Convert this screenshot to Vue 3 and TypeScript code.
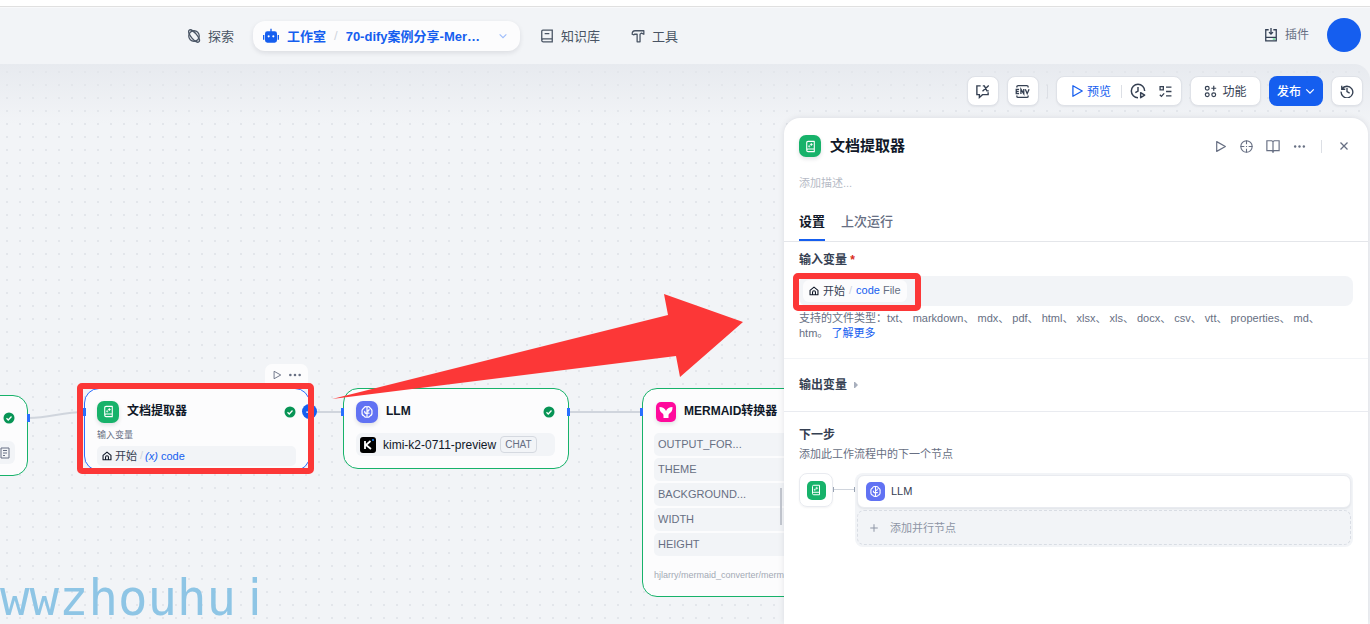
<script setup lang="ts">
interface FlowNode {
  id: string
  x: number
  y: number
}

const nodes: Record<string, FlowNode> = {
  start: { id: 'start', x: -198, y: 331 },
  extractor: { id: 'extractor', x: 84, y: 324 },
  llm: { id: 'llm', x: 343, y: 324 },
  mermaid: { id: 'mermaid', x: 642, y: 324 },
}

const place = (node: FlowNode) => ({ left: `${node.x}px`, top: `${node.y}px` })

const mermaidParams: string[] = ['OUTPUT_FOR...', 'THEME', 'BACKGROUND...', 'WIDTH', 'HEIGHT']

const fileTypes: string[] = [
  'txt', 'markdown', 'mdx', 'pdf', 'html', 'xlsx', 'xls', 'docx', 'csv', 'vtt', 'properties', 'md',
]
const supported: string = fileTypes.map((t) => `${t}、`).join(' ') + ' htm。'
</script>

<template>
  <div class="page">
    <svg class="defs" aria-hidden="true">
      <symbol id="i-doc" viewBox="0 0 24 24">
        <path d="M5 18.500V5a2.500 2.500 0 0 1 2.500-2.500H19v19H7.500a2.500 2.500 0 0 1 0-5H19" fill="none" stroke="currentColor" stroke-width="2" stroke-linejoin="round" />
        <path d="M13.500 5.500l.8 2 2 .8-2 .8-.8 2-.8-2-2-.8 2-.8zM9.500 9.500l.6 1.500 1.500.6-1.500.6-.6 1.500-.6-1.500-1.500-.6 1.500-.6z" fill="currentColor" stroke="currentColor" stroke-width=".6" />
      </symbol>
      <symbol id="i-play" viewBox="0 0 24 24">
        <path d="M5 3v18L21 12z" fill="none" stroke="currentColor" stroke-width="2.200" stroke-linejoin="round" />
      </symbol>
      <symbol id="i-more" viewBox="0 0 24 24">
        <circle cx="4" cy="12" r="2.200" fill="currentColor" /><circle cx="12" cy="12" r="2.200" fill="currentColor" /><circle cx="20" cy="12" r="2.200" fill="currentColor" />
      </symbol>
      <symbol id="i-home" viewBox="0 0 24 24">
        <path d="M2.500 10.500L12 2.500l9.500 8V21h-19zM8.500 20v-5a3.500 3.500 0 0 1 7 0v5" fill="none" stroke="currentColor" stroke-width="2.600" stroke-linejoin="round" />
      </symbol>
      <symbol id="i-check" viewBox="0 0 24 24">
        <circle cx="12" cy="12" r="11" fill="#079455" />
        <path d="M7 12.500l3.500 3.500 6.500-7" fill="none" stroke="#fff" stroke-width="2.500" />
      </symbol>
      <symbol id="i-brain" viewBox="0 0 24 24">
        <path d="M12 3v18M12 3.500C9.500 2 7 3.500 6.500 5.500 4 6.500 3 9 3.500 12c-.5 3.500 1 6 3.500 6.800 1 2 3.500 2.700 5 1.700 1.500 1 4 .3 5-1.700 2.500-.8 4-3.300 3.500-6.800.5-3-.5-5.500-3-6.500C17 3.500 14.500 2 12 3.500zM12 14.500c-2.500 0-4-1-4-3.500M12 10.500c2 0 3.500-1 3.500-3M12 14h3.500" fill="none" stroke="currentColor" stroke-width="2" stroke-linecap="round" />
      </symbol>
    </svg>

    <header class="topbar">
      <nav class="nav">
        <a class="nav-item" href="#explore">
          <svg class="ic14" viewBox="0 0 24 24" fill="none" stroke="currentColor" stroke-width="2.200">
            <circle cx="12" cy="12" r="9" /><ellipse cx="12" cy="12" rx="13" ry="5" transform="rotate(50 12 12)" />
          </svg>
          <span>探索</span>
        </a>
        <div class="nav-pill">
          <a class="pill-link" href="#studio">
            <svg class="ic16" viewBox="0 0 24 24" fill="currentColor">
              <path d="M11 1h2v4h4.500A3.500 3.500 0 0 1 21 8.500V18.500A3.500 3.500 0 0 1 17.500 22h-11A3.500 3.500 0 0 1 3 18.500V8.500A3.500 3.500 0 0 1 6.500 5H11zM0 10.500h2v7H0zM22 10.500h2v7h-2z" />
              <circle cx="8.500" cy="12.500" r="1.600" fill="#fff" /><circle cx="15.500" cy="12.500" r="1.600" fill="#fff" />
            </svg>
            <span>工作室</span>
          </a>
          <span class="slash">/</span>
          <button class="app-switch" type="button">
            <span>70-dify案例分享-Mer…</span>
            <svg class="ic10" viewBox="0 0 24 24" fill="none" stroke="#9dbcfb" stroke-width="2.600"><path d="M4 8l8 8 8-8" /></svg>
          </button>
        </div>
        <a class="nav-item" href="#knowledge">
          <svg class="ic14" viewBox="0 0 24 24" fill="none" stroke="currentColor" stroke-width="2.200">
            <path d="M3 19V4a2 2 0 0 1 2-2h16v20H5.500a2.500 2.500 0 0 1 0-5H21M8 8h8" />
          </svg>
          <span>知识库</span>
        </a>
        <a class="nav-item tools" href="#tools">
          <svg class="ic14" viewBox="0 0 24 24" fill="none" stroke="currentColor" stroke-width="2.200" stroke-linejoin="round">
            <path d="M2 9c0-4 2-6 5-6h15v6l-4-2-2.500 2v13h-5V9H6l-1 1z" />
          </svg>
          <span>工具</span>
        </a>
      </nav>
      <div class="account">
        <a class="plugins" href="#plugins">
          <svg class="ic14" viewBox="0 0 24 24" fill="none" stroke="#344054" stroke-width="2.200">
            <path d="M8 3H3v19h18V3h-5M3 16h18M12 0v10M8.500 7l3.500 3.500L15.500 7" /><path d="M15 19h4" stroke="#4ade80" />
          </svg>
          <span>插件</span>
        </a>
        <button class="avatar" type="button" aria-label="account"></button>
      </div>
    </header>

    <main class="canvas">
      <section class="flow">
        <svg class="edges" aria-hidden="true">
          <g fill="none" stroke="#d0d5dd" stroke-width="2">
            <path d="M29 354C50 354 62 348 84 348" /><path d="M310 348H343" /><path d="M569 348H642" />
          </g>
        </svg>

        <article class="node node-start" :style="place(nodes.start)">
          <svg class="ic12 state"><use href="#i-check" /></svg>
          <div class="start-row">
            <svg class="ic12" viewBox="0 0 24 24" fill="none" stroke="#676f83" stroke-width="2"><path d="M4 2h16v20H4zM8 7h8M8 12h8M8 17h4" /></svg>
          </div>
        </article>

        <div class="node-actions">
          <button type="button" aria-label="run"><svg class="ic10"><use href="#i-play" /></svg></button>
          <button type="button" aria-label="more"><svg class="ic14"><use href="#i-more" /></svg></button>
        </div>
        <article class="node selected" :style="place(nodes.extractor)">
          <div class="node-head">
            <span class="badge green"><svg class="ic13"><use href="#i-doc" /></svg></span>
            <h3>文档提取器</h3>
            <svg class="ic12 state"><use href="#i-check" /></svg>
          </div>
          <div class="node-label">输入变量</div>
          <div class="var-row">
            <svg class="ic10 dark"><use href="#i-home" /></svg>
            <span>开始</span><span class="slash">/</span><i>(x)</i><b>code</b>
          </div>
        </article>
        <button class="add-next" type="button" aria-label="add">
          <svg class="ic10" viewBox="0 0 24 24" stroke="#fff" stroke-width="3"><path d="M12 3v18M3 12h18" /></svg>
        </button>

        <article class="node" :style="place(nodes.llm)">
          <div class="node-head">
            <span class="badge indigo"><svg class="ic14"><use href="#i-brain" /></svg></span>
            <h3>LLM</h3>
            <svg class="ic12 state"><use href="#i-check" /></svg>
          </div>
          <div class="model-row">
            <svg class="ic16" viewBox="0 0 16 16">
              <rect width="16" height="16" rx="3" fill="#000" /><path d="M5 4v8M10.500 4L6 8l5 4" fill="none" stroke="#fff" stroke-width="1.800" /><circle cx="13" cy="3" r="1" fill="#1783ff" />
            </svg>
            <span>kimi-k2-0711-preview</span><em>CHAT</em>
          </div>
        </article>

        <article class="node node-mermaid" :style="place(nodes.mermaid)">
          <div class="node-head">
            <span class="badge pink">
              <svg class="ic20" viewBox="0 0 20 20"><path d="M3.500 5C6.500 5 9 6.500 10 9c1-2.500 3.500-4 6.500-4 .2 3.500-1 5-2.800 6.300-.9.700-1.200 1.400-1.200 2.400V16h-5v-2.300c0-1-.3-1.700-1.200-2.400C4.500 10 3.300 8.500 3.500 5z" fill="#fff" /></svg>
            </span>
            <h3>MERMAID转换器</h3>
          </div>
          <ul class="params">
            <li v-for="p in mermaidParams" :key="p">{{ p }}</li>
          </ul>
          <div class="plugin-path">hjlarry/mermaid_converter/mermaid_converter</div>
        </article>

        <svg class="edges" aria-hidden="true">
          <g fill="#2970ff">
            <rect x="27" y="350" width="3" height="8" /><rect x="83" y="344" width="3" height="8" />
            <rect x="341" y="344" width="3" height="8" /><rect x="567" y="344" width="3" height="8" /><rect x="640" y="344" width="3" height="8" />
          </g>
        </svg>
        <div class="watermark">wwzhouhu<span>i</span></div>
        <span class="scroll-mark"></span>
      </section>

      <div class="toolbar">
        <button class="tool square" type="button" aria-label="conversation variables">
          <svg class="ic15" viewBox="0 0 24 24" fill="none" stroke="currentColor" stroke-width="2.200">
            <path d="M9 3H3v14h4v4.500l5-4.500h9v-4" /><path d="M12.500 3H15l4 8h3M22 2.500L12 11.500" />
          </svg>
        </button>
        <button class="tool square" type="button" aria-label="environment variables">
          <svg class="ic15" viewBox="0 0 24 24" fill="none" stroke="currentColor" stroke-width="2.100">
            <path d="M3 5.500V4.500a2 2 0 0 1 2-2h14a2 2 0 0 1 2 2v1M3 18.500v1a2 2 0 0 0 2 2h14a2 2 0 0 0 2-2v-1M6.500 8.500H2v7h4.500M2 12h4M9.500 16V8.500l4.500 7V8M16.500 8.500l3 7 3-7" />
          </svg>
        </button>
        <span class="vline"></span>
        <div class="tool group">
          <button class="preview" type="button"><svg class="ic14"><use href="#i-play" /></svg><span>预览</span></button>
          <span class="vline"></span>
          <button type="button" aria-label="run history">
            <svg class="ic16" viewBox="0 0 24 24" fill="none" stroke="currentColor" stroke-width="2.200">
              <path d="M22 12A10 10 0 1 0 12 22M12 6v6l-4 2.500" /><path d="M16 14.500v7.500l6-3.700z" stroke-linejoin="round" />
            </svg>
          </button>
          <button type="button" aria-label="checklist">
            <svg class="ic13" viewBox="0 0 24 24" fill="none" stroke="currentColor" stroke-width="2.400">
              <path d="M2 3h6v6H2zM13 4h10M13 12h10M13 20h10M1.500 18l3 3 5-5.500" />
            </svg>
          </button>
        </div>
        <button class="tool features" type="button">
          <svg class="ic13" viewBox="0 0 24 24" fill="none" stroke="currentColor" stroke-width="2.200">
            <circle cx="6" cy="6" r="3.500" /><circle cx="6" cy="18" r="3.500" /><circle cx="18" cy="18" r="3.500" /><path d="M18 1.500v9M13.500 6h9" />
          </svg>
          <span>功能</span>
        </button>
        <button class="publish" type="button">
          <span>发布</span>
          <svg class="ic10" viewBox="0 0 24 24" fill="none" stroke="#fff" stroke-width="3"><path d="M3 8l9 9 9-9" /></svg>
        </button>
        <button class="tool square" type="button" aria-label="version history">
          <svg class="ic14" viewBox="0 0 24 24" fill="none" stroke="currentColor" stroke-width="2.300">
            <path d="M3 3v6h6M3.500 8.500A10 10 0 1 1 2 13M12 6.500V13l4.500 2.500" />
          </svg>
        </button>
      </div>

      <aside class="panel">
        <div class="panel-head">
          <span class="badge green"><svg class="ic13"><use href="#i-doc" /></svg></span>
          <h2>文档提取器</h2>
          <div class="panel-tools">
            <button type="button" aria-label="run"><svg class="ic13"><use href="#i-play" /></svg></button>
            <button type="button" aria-label="locate">
              <svg class="ic13" viewBox="0 0 24 24" fill="none" stroke="currentColor" stroke-width="2"><circle cx="12" cy="12" r="10.500" /><path d="M12 1v7M12 16v7M1 12h7M16 12h7M11 12h2" /></svg>
            </button>
            <button type="button" aria-label="docs">
              <svg class="ic14" viewBox="0 0 24 24" fill="none" stroke="currentColor" stroke-width="2"><path d="M1.500 3H10l2 1.500L14 3h8.500v17H14l-2 1.500L10 20H1.500zM12 4v20" /></svg>
            </button>
            <button type="button" aria-label="more"><svg class="ic13"><use href="#i-more" /></svg></button>
            <span class="vline"></span>
            <button type="button" aria-label="close">
              <svg class="ic12" viewBox="0 0 24 24" fill="none" stroke="currentColor" stroke-width="2.600"><path d="M5 5l14 14M19 5L5 19" /></svg>
            </button>
          </div>
        </div>
        <input class="desc" type="text" placeholder="添加描述..." aria-label="添加描述" />
        <div class="tabs" role="tablist">
          <button type="button" role="tab" aria-selected="true" class="active">设置</button>
          <button type="button" role="tab" aria-selected="false">上次运行</button>
        </div>

        <section class="block inputs">
          <h4>输入变量 <span class="req">*</span></h4>
          <button class="field" type="button">
            <span class="chip">
              <svg class="ic10 dark"><use href="#i-home" /></svg>
              <span>开始</span><span class="slash">/</span><b>code</b><span class="type">File</span>
            </span>
          </button>
          <p class="help">支持的文件类型：{{ supported }} <a href="#more">了解更多</a></p>
        </section>

        <section class="block outputs">
          <h4>输出变量</h4>
          <svg class="caret" viewBox="0 0 6 8"><path d="M1 1h1l3 3-3 3H1z" fill="#a8afbd" /></svg>
        </section>

        <section class="block next">
          <h4>下一步</h4>
          <p>添加此工作流程中的下一个节点</p>
          <div class="next-row">
            <div class="origin"><span class="badge green small"><svg class="ic12"><use href="#i-doc" /></svg></span></div>
            <span class="link"></span>
            <div class="targets">
              <button class="target" type="button">
                <span class="badge indigo small"><svg class="ic13"><use href="#i-brain" /></svg></span><span class="cap">LLM</span>
              </button>
              <button class="parallel" type="button">
                <svg class="ic10" viewBox="0 0 24 24" stroke="currentColor" stroke-width="2.400"><path d="M12 3v18M3 12h18" /></svg><span class="cap">添加并行节点</span>
              </button>
            </div>
          </div>
        </section>
      </aside>

      <div class="mark mark-node"></div>
      <div class="mark mark-field"></div>
      <svg class="arrow" aria-hidden="true"><path d="M332 335L668 251 664 230 743 258 680 313 676 292z" fill="#fc3737" /></svg>
    </main>
  </div>
</template>

<style>
body {
  margin: 0;
}
</style>

<style scoped>
.page {
  display: flex;
  flex-direction: column;
  min-height: 100vh;
  background: #f2f4f7;
  color: #354052;
  font-family: "Liberation Sans", "Noto Sans CJK SC", sans-serif;
  font-size: 12px;
  overflow: hidden;
}
.page *,
.page *::before {
  box-sizing: border-box;
}
.defs {
  position: absolute;
  width: 0;
  height: 0;
}
h2, h3, h4, p, ul {
  margin: 0;
  padding: 0;
}
button, input {
  margin: 0;
  padding: 0;
  border: 0;
  background: none;
  font: inherit;
  color: inherit;
}
a {
  color: inherit;
  text-decoration: none;
}
svg {
  flex: none;
}
button {
  display: flex;
  align-items: center;
  justify-content: center;
}
.ic10 { width: 10px; height: 10px; }
.ic12 { width: 12px; height: 12px; }
.ic13 { width: 13px; height: 13px; }
.ic14 { width: 14px; height: 14px; }
.ic15 { width: 15px; height: 15px; }
.ic16 { width: 16px; height: 16px; }
.ic20 { width: 20px; height: 20px; }
.dark { color: #101828; }
.slash { color: #d0d5dd; }

/* The CJK face sits low in its line box; this centres it beside icons. */
.nav span,
.account span,
.tool span:not(.vline),
.publish span,
.chip > span,
.var-row span,
.cap {
  padding-bottom: 2px;
}

.topbar {
  display: flex;
  align-items: center;
  justify-content: space-between;
  height: 64px;
  padding: 2px 9px 0 187px;
  border-top: 6px solid #fff;
  background: linear-gradient(#e0e0e0 1px, #f8f9fb 1px, #f8f9fb 2px, #f2f4f7 2px);
}
.nav {
  display: flex;
  align-items: center;
  font-size: 13px;
}
.nav-item {
  display: flex;
  align-items: center;
  gap: 7px;
  color: #495464;
}
.nav-item.tools {
  margin-left: 31px;
}
.nav-pill {
  display: flex;
  align-items: center;
  width: 267px;
  height: 30px;
  margin: 0 20px 0 19px;
  padding: 0 12px 0 10px;
  border-radius: 12px;
  background: #fcfcfd;
  box-shadow: 0 2px 5px rgba(16, 24, 40, 0.1);
  color: #155eef;
  font-weight: 700;
}
.pill-link {
  display: flex;
  align-items: center;
  gap: 8px;
}
.nav-pill .slash {
  margin: 0 8px;
  font-weight: 400;
}
.app-switch {
  flex: 1;
  justify-content: space-between;
}
.account {
  display: flex;
  align-items: center;
  gap: 18px;
  padding-bottom: 3px;
}
.plugins {
  display: flex;
  align-items: center;
  gap: 7px;
  color: #676f83;
}
.avatar {
  width: 34px;
  height: 34px;
  border-radius: 50%;
  background: #155eef;
}

.canvas {
  position: relative;
  flex: 1;
  display: flex;
  flex-direction: column;
  border-radius: 0 16px 0 8px;
  background:
    radial-gradient(circle at 7px 8px, #e3e6eb 1px, transparent 1px) 0 0 / 13px 13px,
    linear-gradient(#e7eaef, #f2f4f7 60px);
}
.flow {
  position: absolute;
  inset: 0;
  overflow: hidden;
}
.edges,
.arrow {
  position: absolute;
  inset: 0;
  width: 100%;
  height: 100%;
  pointer-events: none;
}
.node {
  position: absolute;
  width: 226px;
  padding: 11px 13px 12px 12px;
  border: 1px solid #17b26a;
  border-radius: 15px;
  background: #fcfcfd;
}
.node.selected {
  border-color: #296dff;
  padding-bottom: 4px;
}
.node-start {
  height: 81px;
  padding: 16px 12px;
}
.node-start .state {
  display: block;
  margin-left: auto;
}
.start-row {
  display: flex;
  align-items: center;
  justify-content: flex-end;
  height: 23px;
  margin-top: 17px;
  padding-right: 4px;
  border-radius: 6px;
  background: #f2f4f7;
}
.node-head {
  display: flex;
  align-items: center;
  height: 23px;
}
.node-head h3 {
  flex: 1;
  margin-left: 8px;
  padding-bottom: 1px;
  font-size: 12px;
  line-height: 18px;
  color: #101828;
  white-space: nowrap;
}
.badge {
  display: flex;
  align-items: center;
  justify-content: center;
  flex: none;
  width: 22px;
  height: 22px;
  border-radius: 7px;
  color: #fff;
  box-shadow: 0 2px 4px rgba(16, 24, 40, 0.12);
}
.badge.small {
  width: 19px;
  height: 19px;
  border-radius: 5px;
  box-shadow: none;
}
.green { background: #17b26a; }
.indigo { background: #6172f3; }
.pink { background: #ff0a9c; width: 20px; height: 20px; border-radius: 5px; }
.node-label {
  margin-top: 5px;
  font-size: 9px;
  line-height: 14px;
  color: #676f83;
}
.var-row {
  display: flex;
  align-items: center;
  height: 20px;
  margin-top: 4px;
  padding: 0 5px;
  border-radius: 5px;
  background: #f2f4f7;
  font-size: 11px;
}
.var-row span { margin-left: 3px; }
.var-row i {
  margin: 0 3px 0 2px;
  color: #155eef;
}
.var-row b,
.chip b {
  font-weight: 500;
  color: #155eef;
}
.node-actions {
  position: absolute;
  left: 265px;
  top: 300px;
  display: flex;
  gap: 6px;
  padding: 4px 6px 4px 7px;
  border-radius: 7px 7px 0 0;
  background: #fcfcfd;
  color: #676f83;
}
.add-next {
  position: absolute;
  left: 302px;
  top: 340px;
  width: 15px;
  height: 15px;
  border-radius: 50%;
  background: #155eef;
}
.model-row {
  display: flex;
  align-items: center;
  height: 23px;
  margin-top: 10px;
  padding: 0 4px;
  border-radius: 6px;
  background: #f2f4f7;
  color: #101828;
  white-space: nowrap;
}
.model-row span {
  margin-left: 7px;
}
.model-row em {
  margin-left: 4px;
  padding: 0 4px;
  border: 1px solid #d5d9e0;
  border-radius: 4px;
  font-size: 10px;
  line-height: 15px;
  font-style: normal;
  color: #676f83;
}
.node-mermaid {
  padding: 11px 11px 14px;
}
.node-mermaid .badge { margin-left: 2px; }
.params {
  display: flex;
  flex-direction: column;
  gap: 2px;
  margin-top: 10px;
  list-style: none;
}
.params li {
  height: 23px;
  padding-left: 4px;
  border-radius: 5px;
  background: #f2f4f7;
  font-size: 11px;
  line-height: 23px;
  color: #676f83;
}
.plugin-path {
  margin-top: 12px;
  overflow: hidden;
  font-size: 9px;
  line-height: 14px;
  color: #a3a9b5;
  white-space: nowrap;
}
.scroll-mark {
  position: absolute;
  left: 780px;
  top: 424px;
  width: 2px;
  height: 37px;
  background: #c3c7d0;
}
.watermark {
  position: absolute;
  left: 0;
  bottom: 0;
  font-family: "DejaVu Sans Mono", monospace;
  font-size: 49px;
  line-height: 50px;
  color: #8ec5e5;
}
.watermark span {
  margin-left: 12px;
  font-family: "DejaVu Sans", sans-serif;
}

.toolbar {
  position: relative;
  display: flex;
  align-items: center;
  justify-content: flex-end;
  gap: 8px;
  padding: 12px 7px;
}
.tool {
  height: 30px;
  border: 1px solid #dfe2e8;
  border-radius: 8px;
  background: #fff;
  box-shadow: 0 1px 2px rgba(16, 24, 40, 0.06);
}
.square { width: 32px; }
.vline {
  width: 1px;
  height: 13px;
  background: #dcdfe5;
}
.group {
  display: flex;
  align-items: center;
  padding: 0 9px 0 13px;
}
.group .vline { margin: 0 8px 0 10px; }
.group button + button { margin-left: 13px; }
.preview {
  gap: 3px;
  color: #155eef;
}
.features {
  width: 71px;
  gap: 5px;
}
.publish {
  width: 54px;
  height: 30px;
  gap: 4px;
  border-radius: 8px;
  background: #155eef;
  color: #fff;
  font-weight: 500;
}

.panel {
  position: relative;
  display: flex;
  flex-direction: column;
  flex: 1;
  width: 584px;
  margin: 0 2px 0 auto;
  border-radius: 16px 16px 0 0;
  background: #fff;
  box-shadow: 0 0 6px rgba(16, 24, 40, 0.1);
}
.panel-head {
  display: flex;
  align-items: center;
  padding: 17px 18px 0 15px;
}
h2 {
  margin-left: 9px;
  font-size: 15px;
  line-height: 22px;
  color: #101828;
}
.panel-tools {
  display: flex;
  align-items: center;
  gap: 13px;
  margin-left: auto;
  color: #676f83;
}
.panel-tools .vline {
  margin: 0 3px 0 2px;
}
.desc {
  height: 20px;
  margin: 16px 15px 0;
  font-size: 11px;
}
.desc::placeholder {
  color: #b5bac5;
  opacity: 1;
}
.tabs {
  display: flex;
  gap: 16px;
  margin-top: 18px;
  padding: 0 15px;
  border-bottom: 1px solid #e4e6ea;
  font-size: 13px;
  font-weight: 500;
  color: #676f83;
}
.tabs button {
  height: 30px;
  padding-bottom: 10px;
  border-bottom: 2px solid transparent;
}
.tabs .active {
  border-color: #155eef;
  color: #101828;
  font-weight: 700;
}
.block {
  padding: 0 15px;
}
h4 {
  font-size: 12px;
  line-height: 18px;
}
.req { color: #d92d20; }
.inputs {
  padding-top: 9px;
  padding-bottom: 17px;
  border-bottom: 1px solid #f2f4f7;
}
.field {
  justify-content: flex-start;
  width: 100%;
  height: 30px;
  margin-top: 7px;
  padding: 0 4px;
  border-radius: 8px;
  background: #f2f4f7;
  font-size: 11px;
}
.chip {
  display: flex;
  align-items: center;
  height: 22px;
  padding: 0 6px;
  border-radius: 6px;
  background: #fcfcfd;
}
.chip > span { margin-left: 4px; }
.chip b {
  margin-left: 4px;
  padding-bottom: 2px;
}
.chip .type {
  margin-left: 3px;
  color: #676f83;
}
.help {
  margin-top: 5px;
  padding-right: 20px;
  font-size: 11px;
  line-height: 15px;
  color: #676f83;
}
.help a { color: #155eef; }
.outputs {
  display: flex;
  align-items: center;
  gap: 6px;
  padding-top: 17px;
  padding-bottom: 17px;
  border-bottom: 1px solid #e9ebf0;
}
.caret {
  width: 6px;
  height: 8px;
}
.next {
  padding-top: 14px;
  padding-bottom: 16px;
}
.next p {
  margin-top: 2px;
  font-size: 11px;
  line-height: 16px;
  color: #676f83;
}
.next-row {
  display: flex;
  margin-top: 11px;
}
.origin {
  display: flex;
  align-items: center;
  justify-content: center;
  width: 34px;
  height: 34px;
  border: 1px solid #e9ebf0;
  border-radius: 8px;
  box-shadow: 0 1px 2px rgba(16, 24, 40, 0.05);
}
.link {
  width: 22px;
  height: 5px;
  margin-top: 14px;
  border: solid #98a2b2;
  border-width: 0 1px;
  background: linear-gradient(#d0d5dd, #d0d5dd) center / 100% 1px no-repeat;
}
.targets {
  flex: 1;
  display: flex;
  flex-direction: column;
  gap: 2px;
  padding: 2px;
  border-radius: 8px;
  background: #f2f4f7;
}
.target,
.parallel {
  justify-content: flex-start;
  height: 33px;
  border-radius: 7px;
}
.target {
  gap: 6px;
  padding: 0 8px;
  border: 1px solid #e9ebf0;
  background: #fff;
  box-shadow: 0 1px 2px rgba(16, 24, 40, 0.07);
  font-size: 11px;
}
.parallel {
  gap: 11px;
  height: 35px;
  padding: 0 11px;
  border: 1px dashed #d9dde4;
  font-size: 11px;
  color: #8d95a5;
}

.mark {
  position: absolute;
  border: 6px solid #fc3737;
  border-radius: 5px;
  pointer-events: none;
}
.mark-node {
  left: 77px;
  top: 319px;
  width: 237px;
  height: 91px;
}
.mark-field {
  right: 449px;
  top: 209px;
  width: 128px;
  height: 38px;
}
</style>
